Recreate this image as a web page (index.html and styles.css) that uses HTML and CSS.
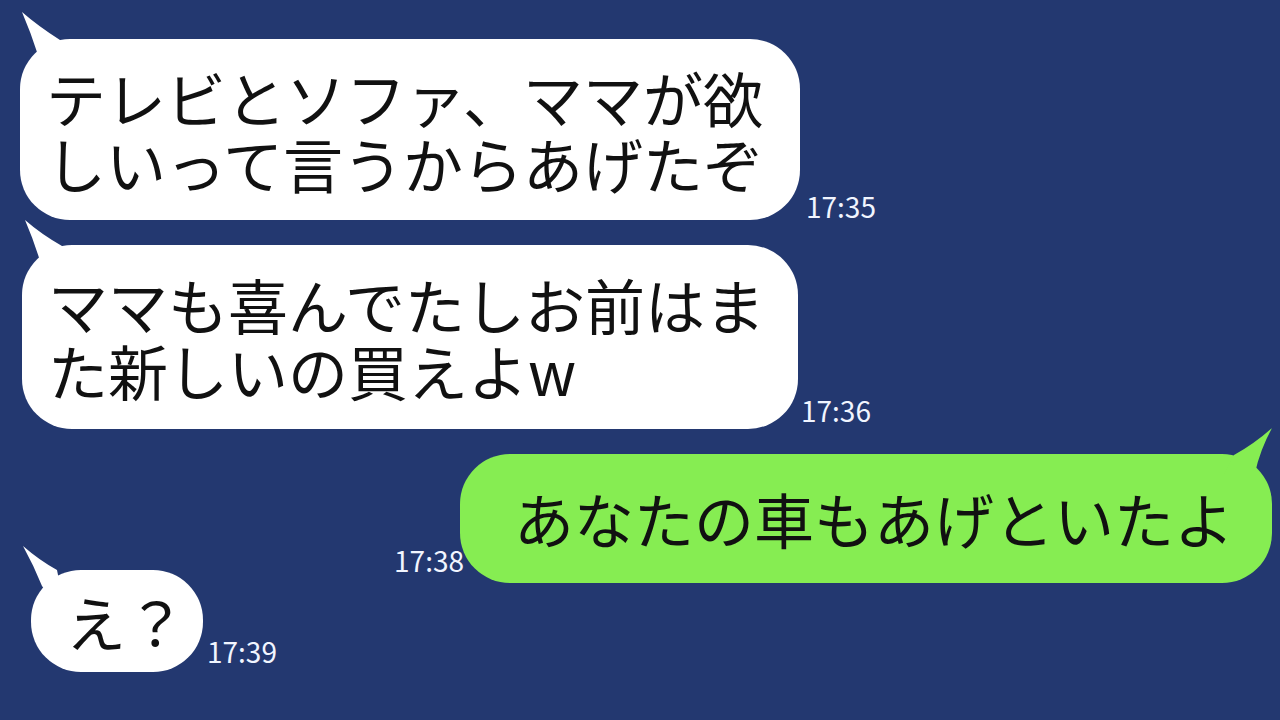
FILE: index.html
```html
<!DOCTYPE html>
<html lang="ja">
<head>
    <meta charset="UTF-8">
    <meta name="viewport" content="width=device-width, initial-scale=1.0">
    <title>トーク</title>
    <link rel="stylesheet" href="styles.css">
</head>
<body>
    <div class="chat">
        <!-- 相手 1 -->
        <div class="row row-first">
            <div class="bubble bubble-in bubble-one">
                <svg class="tail tail-in" viewBox="0 0 50 50" width="50" height="50">
                    <path d="M2 3 Q18 17 40 31 L40 50 L14 50 L18 46 Q11 24 2 3 Z" fill="#fff"/>
                </svg>
                テレビとソファ、ママが欲<br>しいって言うからあげたぞ
            </div>
            <span class="time time-one">17:35</span>
        </div>

        <!-- 相手 2 -->
        <div class="row row-second">
            <div class="bubble bubble-in bubble-two">
                <svg class="tail tail-in" viewBox="0 0 50 50" width="50" height="50">
                    <path d="M3 5 Q19 19 40 31 L40 50 L14 50 L18 46 Q12 26 3 5 Z" fill="#fff"/>
                </svg>
                ママも喜んでたしお前はま<br>た新しいの買えよw
            </div>
            <span class="time time-two">17:36</span>
        </div>

        <!-- 自分 -->
        <div class="row row-mine">
            <span class="time time-three">17:38</span>
            <div class="bubble bubble-out">
                <svg class="tail tail-out" viewBox="0 0 50 50" width="50" height="50">
                    <path d="M48 4 Q30 20 10 31 L0 50 L30 50 L31 49 Q36 26 48 4 Z" fill="#86ed52"/>
                </svg>
                あなたの車もあげといたよ
            </div>
        </div>

        <!-- 相手 3 -->
        <div class="row row-last">
            <div class="bubble bubble-in bubble-short">
                <svg class="tail tail-short" viewBox="0 0 50 50" width="50" height="50">
                    <path d="M2 6 Q18 20 36 30 L40 50 L24 50 L21 46 Q13 26 2 6 Z" fill="#fff"/>
                </svg>
                え？
            </div>
            <span class="time time-four">17:39</span>
        </div>
    </div>
</body>
</html>
```

FILE: styles.css
```css
body {
    margin: 0;
    background: #233870;
    font-family: "Noto Sans CJK JP", "Noto Sans", sans-serif;
    color: #111;
    height: 100vh;
    overflow: hidden;
}

.chat {
    display: flex;
    flex-direction: column;
}

.row {
    display: flex;
    align-items: flex-end;
}

.row-first {
    margin-top: 39px;
    padding-left: 20px;
}

.row-second {
    margin-top: 25px;
    padding-left: 22px;
}

.row-mine {
    margin-top: 25px;
    justify-content: flex-end;
    padding-right: 8px;
}

.row-last {
    margin-top: -13px;
    padding-left: 31px;
}

.bubble {
    position: relative;
    font-size: 60px;
    line-height: 66px;
    white-space: nowrap;
    border-radius: 50px;
}

.bubble-in {
    background: #fff;
}

.bubble-one {
    padding: 25px 37px 24px 26px;
}

.bubble-two {
    padding: 26px 33px 26px 26px;
}

.bubble-out {
    background: #86ed52;
    padding: 31px 38px 32px 54px;
}

.bubble-short {
    padding: 18px 17px 18px 35px;
}

.tail {
    position: absolute;
}

.tail-in {
    left: 0;
    top: -30px;
}

.tail-short {
    left: -10px;
    top: -30px;
}

.tail-out {
    right: -2px;
    top: -30px;
}

.time {
    color: #f1f5ff;
    font-family: "Noto Sans CJK JP", "Noto Sans", sans-serif;
    font-size: 28px;
    line-height: 28px;
}

.time-one {
    margin-left: 6px;
    margin-bottom: 0;
}

.time-two {
    margin-left: 3px;
    margin-bottom: 5px;
}

.time-three {
    margin-right: -4px;
    margin-bottom: 9px;
    position: relative;
    z-index: 1;
}

.time-four {
    margin-left: 4px;
    margin-bottom: 7px;
}
```
